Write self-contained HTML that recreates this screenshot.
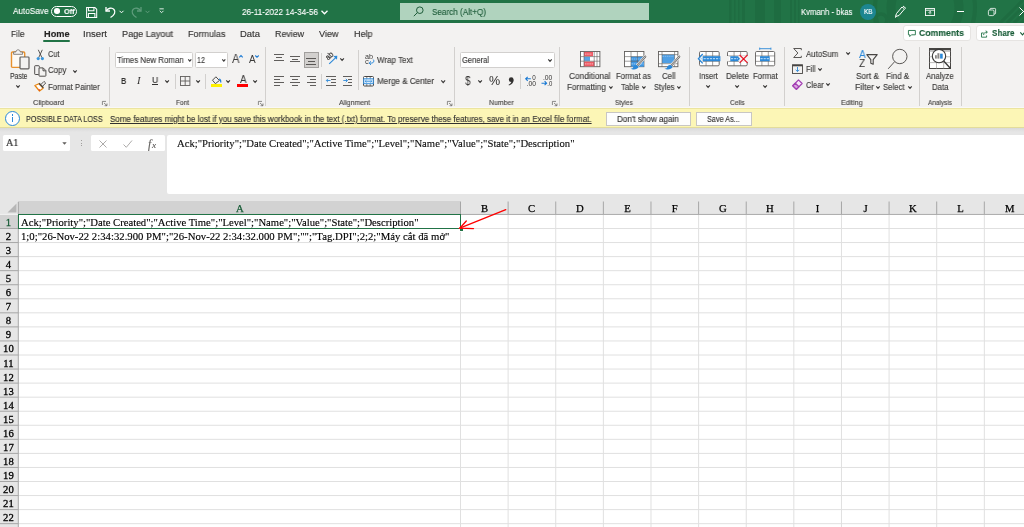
<!DOCTYPE html><html><head><meta charset="utf-8"><title>Excel</title><style>
html,body{margin:0;padding:0;background:#fff;}
#app{position:relative;width:1024px;height:527px;overflow:hidden;background:#fff;font-family:"Liberation Sans", sans-serif;}
.t{position:absolute;white-space:pre;transform-origin:0 50%;line-height:14px;height:14px;-webkit-text-stroke:0.14px currentColor;will-change:transform;}
svg{position:absolute;overflow:visible;}
</style></head><body><div id="app">
<div style="position:absolute;left:0px;top:0px;width:1024px;height:23.2px;background:#217346;"></div>
<div style="position:absolute;left:0px;top:23px;width:1024px;height:86px;background:#f3f2f1;"></div>
<div style="position:absolute;left:0px;top:107.3px;width:1024px;height:1.2px;background:#f9f8f7;"></div>
<div style="position:absolute;left:0px;top:108.3px;width:1024px;height:20px;background:#fcf6b6;border-top:0.600px solid #ebe4a0;border-bottom:0.600px solid #e3dc9c;box-sizing:border-box;"></div>
<div style="position:absolute;left:0px;top:128.3px;width:1024px;height:73px;background:#e6e6e6;"></div>
<div style="position:absolute;left:0px;top:128.3px;width:1024px;height:4px;background:linear-gradient(#d9d9d9,#e6e6e6);"></div>
<svg style="left:0;top:0;overflow:hidden" width="1024" height="23" viewBox="0 0 1024 23" fill="none"><rect x="729" y="0" width="2.5" height="23" fill="#1e6c41"/><rect x="734" y="0" width="1.5" height="23" fill="#1e6c41"/><rect x="738" y="0" width="1.5" height="23" fill="#1e6c41"/><rect x="742" y="0" width="2.8" height="23" fill="#1e6c41"/><rect x="755" y="0" width="10" height="23" fill="#1e6c41"/><rect x="774" y="0" width="6.8" height="23" fill="#1e6c41"/><rect x="790" y="0" width="1.8" height="23" fill="#1e6c41"/><rect x="794" y="0" width="1.8" height="23" fill="#1e6c41"/><rect x="798" y="0" width="1.5" height="23" fill="#1e6c41"/><circle cx="881" cy="20" r="6" stroke="#1e6c41" stroke-width="3.500"/><circle cx="925" cy="8" r="34" stroke="#1e6c41" stroke-width="9"/><circle cx="925" cy="8" r="50" stroke="#1e6c41" stroke-width="4"/><path d="M1000 23l23 -23" stroke="#1e6c41" stroke-width="3"/><path d="M1007 23l23 -23" stroke="#1e6c41" stroke-width="3"/><path d="M1014 23l23 -23" stroke="#1e6c41" stroke-width="3"/><path d="M1021 23l23 -23" stroke="#1e6c41" stroke-width="3"/><path d="M1028 23l23 -23" stroke="#1e6c41" stroke-width="3"/></svg>
<div style="position:absolute;left:51.200px;top:5.500px;width:23.800px;height:9px;border:1px solid #fff;border-radius:7px;box-sizing:content-box"></div>
<div style="position:absolute;left:54.300px;top:8.300px;width:5.500px;height:5.500px;border-radius:50%;background:#fff"></div>
<svg style="left:85.500px;top:6.800px" width="11.300" height="11" viewBox="0 0 12 12" fill="none" stroke="#fff" stroke-width="1.150"><path d="M0.5 0.5h9l2 2v9h-11z"/><path d="M2.5 0.5v3.5h6v-3.5"/><path d="M2.500 11.500v-4.500h7v4.500"/></svg>
<svg style="left:104.500px;top:6.300px" width="12" height="12" viewBox="0 0 12 12" fill="none" stroke="#fff" stroke-width="1.300"><path d="M1 1v4h4"/><path d="M1.200 4.800C3 2 7 1.200 9 3.500c2 2.500 0.500 5.500-3.500 8"/></svg>
<svg style="left:119px;top:9.500px" width="5" height="4" viewBox="0 0 5 4" fill="none" stroke="#fff" stroke-width="1"><path d="M0.500 0.800l2 2 2-2"/></svg>
<svg style="left:129.800px;top:6.300px" width="12" height="12" viewBox="0 0 12 12" fill="none" stroke="#5f9c7c" stroke-width="1.300"><path d="M11 1v4h-4"/><path d="M10.800 4.800C9 2 5 1.200 3 3.500c-2 2.500-0.500 5.500 3.500 8"/></svg>
<svg style="left:144.800px;top:9.500px" width="5" height="4" viewBox="0 0 5 4" fill="none" stroke="#5f9c7c" stroke-width="1"><path d="M0.500 0.800l2 2 2-2"/></svg>
<svg style="left:158.900px;top:8.200px" width="5.200" height="6" viewBox="0 0 6 7" fill="none" stroke="#fff" stroke-width="1"><path d="M0.500 1h5"/><path d="M0.800 3.300l2.200 2.200 2.200-2.200"/></svg>
<svg style="left:320.600px;top:9.600px" width="7" height="5" viewBox="0 0 7 5" fill="none" stroke="#fff" stroke-width="1.300"><path d="M0.500 0.800l3 3 3-3"/></svg>
<div style="position:absolute;left:400px;top:2.5px;width:249px;height:17.5px;background:#b0d3be;"></div>
<svg style="left:412.500px;top:6px" width="11" height="11" viewBox="0 0 11 11" fill="none" stroke="#1e5c3a" stroke-width="1"><circle cx="6.800" cy="4.200" r="3.300"/><path d="M4.400 6.600L0.800 10.200"/></svg>
<div style="position:absolute;left:859.5px;top:3.500px;width:16px;height:16px;border-radius:50%;background:#1d8691"></div>
<svg style="left:894px;top:5px" width="13" height="13" viewBox="0 0 13 13" fill="none" stroke="#fff" stroke-width="1"><path d="M2.500 8.500l5.500-6.500 2.500 2-5.500 6.500-3.500 1z"/><path d="M9 1l3 2.500"/><path d="M1 12.500l1.500-1"/></svg>
<svg style="left:925px;top:7.500px" width="10" height="8" viewBox="0 0 11 9" fill="none" stroke="#fff" stroke-width="1"><rect x="0.500" y="0.500" width="10" height="8"/><path d="M0.500 2.500h10"/><path d="M5.500 7v-3M4 5.300l1.500-1.500 1.500 1.500"/></svg>
<div style="position:absolute;left:957.3px;top:11px;width:6.7px;height:1px;background:#fff;"></div>
<svg style="left:987.700px;top:7.700px" width="8" height="8" viewBox="0 0 10 10" fill="none" stroke="#fff" stroke-width="1"><rect x="0.500" y="2.500" width="7" height="7" rx="1.500"/><path d="M2.500 2.500v-1a1 1 0 0 1 1-1h5a1 1 0 0 1 1 1v5a1 1 0 0 1-1 1h-1"/></svg>
<svg style="left:1019px;top:7px" width="9" height="9" viewBox="0 0 9 9" fill="none" stroke="#fff" stroke-width="1"><path d="M0.500 0.500l8 8M8.500 0.500l-8 8"/></svg>
<div style="position:absolute;left:43px;top:40.3px;width:26.5px;height:2.2px;background:#217346;border-radius:1px;"></div>
<div style="position:absolute;left:902.800px;top:25.100px;width:67.800px;height:16.400px;background:#fff;border:0.600px solid #e6e4e2;border-radius:3px;box-sizing:border-box"></div>
<svg style="left:908.200px;top:29.600px" width="7.800" height="7" viewBox="0 0 9 8" fill="none" stroke="#217346" stroke-width="1.050"><path d="M0.500 0.500h8v5h-4.500l-2 2v-2h-1.500z"/></svg>
<div style="position:absolute;left:976px;top:25.100px;width:52px;height:16.400px;background:#fff;border:0.600px solid #e6e4e2;border-radius:3px;box-sizing:border-box"></div>
<svg style="left:981px;top:30.200px" width="7.800" height="7.600" viewBox="0 0 9 9" fill="none" stroke="#217346" stroke-width="1.050"><path d="M3 3.500h-2.500v5h6v-2"/><path d="M3 6c0-2.500 1.500-3.500 4-3.500M5.500 0.800l2 1.700-2 1.700"/></svg>
<svg style="left:1019.500px;top:32.300px" width="5" height="3.500" viewBox="0 0 5 3.500" fill="none" stroke="#185c37" stroke-width="1.100"><path d="M0.300 0.400l2.200 2.500 2.200-2.500"/></svg>
<div style="position:absolute;left:109.0px;top:46.5px;width:1px;height:59.5px;background:#d2d0ce;"></div>
<div style="position:absolute;left:265.0px;top:46.5px;width:1px;height:59.5px;background:#d2d0ce;"></div>
<div style="position:absolute;left:454.0px;top:46.5px;width:1px;height:59.5px;background:#d2d0ce;"></div>
<div style="position:absolute;left:559.0px;top:46.5px;width:1px;height:59.5px;background:#d2d0ce;"></div>
<div style="position:absolute;left:688.5px;top:46.5px;width:1px;height:59.5px;background:#d2d0ce;"></div>
<div style="position:absolute;left:784.0px;top:46.5px;width:1px;height:59.5px;background:#d2d0ce;"></div>
<div style="position:absolute;left:919.0px;top:46.5px;width:1px;height:59.5px;background:#d2d0ce;"></div>
<div style="position:absolute;left:961.0px;top:46.5px;width:1px;height:59.5px;background:#d2d0ce;"></div>
<svg style="left:10px;top:48px" width="20" height="22" viewBox="0 0 20 22" fill="none">
<rect x="1.500" y="4" width="13.200" height="15.400" rx="1" stroke="#e8912d" stroke-width="1.400" fill="#fdfaf5"/>
<path d="M3.600 6.300v-2.300h2.300c0-2.900 4.400-2.900 4.400 0h2.300v2.300z" fill="#f3f2f1" stroke="#797775" stroke-width="0.900"/>
<rect x="10" y="9" width="9" height="11.800" rx="0.800" fill="#f3f2f1" stroke="#605e5c" stroke-width="1.200"/>
</svg>
<svg style="left:16.3px;top:85.3px" width="4" height="3.0" viewBox="0 0 4 3.0" fill="none" stroke="#3b3a39" stroke-width="1.15"><path d="M0.300 0.400l1.7 2.0l1.7 -2.0"/></svg>
<svg style="left:36px;top:48.500px" width="9" height="12" viewBox="0 0 9 12" fill="none">
<path d="M2.300 0.800l3.600 7.800M6.300 0.800l-3.600 7.800" stroke="#484644" stroke-width="0.900"/>
<circle cx="2.200" cy="9.600" r="1.600" fill="#3a96dd"/><circle cx="6.400" cy="9.600" r="1.600" fill="#3a96dd"/></svg>
<svg style="left:34px;top:64.500px" width="13" height="12" viewBox="0 0 13 12" fill="none" stroke="#484644" stroke-width="0.950">
<path d="M5.300 2.400v-1.100a0.600 0.600 0 0 0-0.600-0.600h-3.400a0.600 0.600 0 0 0-0.600 0.600v7.600a0.600 0.600 0 0 0 0.600 0.600h3.300"/>
<path d="M5 2.900h4.200l2.700 2.700v5a0.600 0.600 0 0 1-0.600 0.600h-5.700a0.600 0.600 0 0 1-0.600-0.600z" fill="#f3f2f1"/>
<path d="M9 3.100v2.700h2.700"/></svg>
<svg style="left:73.3px;top:69.7px" width="4" height="3.0" viewBox="0 0 4 3.0" fill="none" stroke="#3b3a39" stroke-width="1.15"><path d="M0.300 0.400l1.7 2.0l1.7 -2.0"/></svg>
<svg style="left:34px;top:80px" width="12" height="12" viewBox="0 0 12 12" fill="none">
<path d="M0.900 5.500l4-1.700 4.200 4.400-3.600 2.800z" fill="#fff" stroke="#e8820c" stroke-width="1.200" stroke-linejoin="round"/>
<circle cx="5.400" cy="9.800" r="0.600" fill="#e81123"/>
<path d="M6.900 4.500l3.100-3.100 1.700 1.600-3.100 3.300" stroke="#484644" stroke-width="0.900"/>
<path d="M5.100 3.200l4.300 4.500" stroke="#484644" stroke-width="1.400"/></svg>
<svg style="left:101.8px;top:100.6px" width="5.500" height="5" viewBox="0 0 5.500 5" fill="none" stroke="#605e5c" stroke-width="0.700"><path d="M0.400 4v-3.600h3.600"/><path d="M2 2l3 2.600M5 2.500v2.200h-2.400"/></svg>
<div style="position:absolute;left:115.300px;top:51.900px;width:77.700px;height:15.700px;background:#fff;border:0.700px solid #d2d0ce;border-radius:1.500px;box-sizing:border-box"></div>
<svg style="left:187.6px;top:59px" width="3.6" height="2.8" viewBox="0 0 3.6 2.8" fill="none" stroke="#3b3a39" stroke-width="1.15"><path d="M0.300 0.400l1.5 1.8l1.5 -1.8"/></svg>
<div style="position:absolute;left:194.600px;top:51.900px;width:33px;height:15.700px;background:#fff;border:0.700px solid #d2d0ce;border-radius:1.500px;box-sizing:border-box"></div>
<svg style="left:222px;top:59px" width="3.6" height="2.8" viewBox="0 0 3.6 2.8" fill="none" stroke="#3b3a39" stroke-width="1.15"><path d="M0.300 0.400l1.5 1.8l1.5 -1.8"/></svg>
<svg style="left:238.700px;top:54.800px" width="4" height="3" viewBox="0 0 4 3" fill="none" stroke="#1a7ad4" stroke-width="1.100"><path d="M0.300 2.400l1.700-1.800 1.700 1.800"/></svg>
<svg style="left:255px;top:54.800px" width="4" height="3" viewBox="0 0 4 3" fill="none" stroke="#1a7ad4" stroke-width="1.100"><path d="M0.300 0.500l1.700 1.800 1.700-1.800"/></svg>
<div style="position:absolute;left:151.9px;top:84.3px;width:6.2px;height:0.8px;background:#323130;"></div>
<svg style="left:165.4px;top:79.8px" width="4.2" height="3.1" viewBox="0 0 4.2 3.1" fill="none" stroke="#3b3a39" stroke-width="1.15"><path d="M0.300 0.400l1.8 2.1l1.8 -2.1"/></svg>
<div style="position:absolute;left:175.2px;top:74px;width:1px;height:14.5px;background:#d2d0ce;"></div>
<svg style="left:180.400px;top:76px" width="10.400" height="10" viewBox="0 0 10.400 10" fill="none" stroke="#605e5c" stroke-width="0.900"><rect x="0.500" y="0.500" width="9.400" height="9"/><path d="M5.200 0.500v9M0.500 5h9.400"/></svg>
<svg style="left:196px;top:79.8px" width="4.2" height="3.1" viewBox="0 0 4.2 3.1" fill="none" stroke="#3b3a39" stroke-width="1.15"><path d="M0.300 0.400l1.8 2.1l1.8 -2.1"/></svg>
<div style="position:absolute;left:205.2px;top:74px;width:1px;height:14.5px;background:#d2d0ce;"></div>
<svg style="left:211.500px;top:75.500px" width="10" height="9" viewBox="0 0 10 9" fill="none">
<path d="M3.900 0.800l3.500 3.700-4 3.200-2.900-3.500z" stroke="#3b3a39" stroke-width="0.900" stroke-linejoin="round"/>
<path d="M7.300 2.800c1.300 0.900 1.700 2.200 1.500 3.700" stroke="#1a7ad4" stroke-width="1.200"/></svg>
<div style="position:absolute;left:210.5px;top:83.9px;width:11.5px;height:2.8px;background:#fff100;"></div>
<svg style="left:226px;top:79.8px" width="4.2" height="3.1" viewBox="0 0 4.2 3.1" fill="none" stroke="#3b3a39" stroke-width="1.15"><path d="M0.300 0.400l1.8 2.1l1.8 -2.1"/></svg>
<div style="position:absolute;left:237.1px;top:83.9px;width:11.1px;height:2.8px;background:#ff0000;"></div>
<svg style="left:252.7px;top:79.8px" width="4.2" height="3.1" viewBox="0 0 4.2 3.1" fill="none" stroke="#3b3a39" stroke-width="1.15"><path d="M0.300 0.400l1.8 2.1l1.8 -2.1"/></svg>
<svg style="left:257.7px;top:100.6px" width="5.500" height="5" viewBox="0 0 5.500 5" fill="none" stroke="#605e5c" stroke-width="0.700"><path d="M0.400 4v-3.600h3.600"/><path d="M2 2l3 2.600M5 2.500v2.200h-2.400"/></svg>
<div style="position:absolute;left:274.1px;top:53.849999999999994px;width:9.9px;height:0.9px;background:#605e5c;"></div>
<div style="position:absolute;left:275.8px;top:56.75px;width:6.499999999999999px;height:0.9px;background:#605e5c;"></div>
<div style="position:absolute;left:274.1px;top:59.65px;width:9.9px;height:0.9px;background:#605e5c;"></div>
<div style="position:absolute;left:290.1px;top:55.949999999999996px;width:9.9px;height:0.9px;background:#605e5c;"></div>
<div style="position:absolute;left:291.8px;top:58.55px;width:6.499999999999999px;height:0.9px;background:#605e5c;"></div>
<div style="position:absolute;left:290.1px;top:61.15px;width:9.9px;height:0.9px;background:#605e5c;"></div>
<div style="position:absolute;left:304px;top:52.200px;width:15px;height:15.600px;background:#d2d0ce;border:0.800px solid #a19f9d;box-sizing:border-box"></div>
<div style="position:absolute;left:306.4px;top:58.449999999999996px;width:9.9px;height:0.9px;background:#5a5856;"></div>
<div style="position:absolute;left:308.09999999999997px;top:61.15px;width:6.499999999999999px;height:0.9px;background:#5a5856;"></div>
<div style="position:absolute;left:306.4px;top:63.849999999999994px;width:9.9px;height:0.9px;background:#5a5856;"></div>
<div style="position:absolute;left:321.0px;top:52.5px;width:1px;height:14.5px;background:#d2d0ce;"></div>
<svg style="left:325px;top:52px;will-change:transform" width="14" height="14" viewBox="0 0 14 14" fill="none">
<path d="M4.200 11.900l6.800-6.500" stroke="#2b88d8" stroke-width="1.100"/><path d="M8.300 4.100l4-0.300-0.300 4z" fill="#2b88d8"/>
<text x="0" y="0" transform="translate(3.300 8.600) rotate(-45)" font-size="8" font-family="Liberation Sans, sans-serif" fill="#3b3a39" stroke="#3b3a39" stroke-width="0.250" textLength="8" lengthAdjust="spacingAndGlyphs">ab</text></svg>
<svg style="left:339.8px;top:58.2px" width="4.2" height="3.1" viewBox="0 0 4.2 3.1" fill="none" stroke="#3b3a39" stroke-width="1.15"><path d="M0.300 0.400l1.8 2.1l1.8 -2.1"/></svg>
<div style="position:absolute;left:357.8px;top:50.3px;width:1px;height:39.400000000000006px;background:#d2d0ce;"></div>
<div style="position:absolute;left:274.2px;top:76.35px;width:9.7px;height:0.9px;background:#605e5c;"></div>
<div style="position:absolute;left:274.2px;top:79.05px;width:6px;height:0.9px;background:#605e5c;"></div>
<div style="position:absolute;left:274.2px;top:81.75px;width:9.7px;height:0.9px;background:#605e5c;"></div>
<div style="position:absolute;left:274.2px;top:84.55px;width:6px;height:0.9px;background:#605e5c;"></div>
<div style="position:absolute;left:290.2px;top:76.35px;width:9.8px;height:0.9px;background:#605e5c;"></div>
<div style="position:absolute;left:292.09999999999997px;top:79.05px;width:6.0px;height:0.9px;background:#605e5c;"></div>
<div style="position:absolute;left:290.2px;top:81.75px;width:9.8px;height:0.9px;background:#605e5c;"></div>
<div style="position:absolute;left:292.09999999999997px;top:84.55px;width:6.0px;height:0.9px;background:#605e5c;"></div>
<div style="position:absolute;left:306.5px;top:76.35px;width:9.8px;height:0.9px;background:#605e5c;"></div>
<div style="position:absolute;left:310.3px;top:79.05px;width:6.000000000000001px;height:0.9px;background:#605e5c;"></div>
<div style="position:absolute;left:306.5px;top:81.75px;width:9.8px;height:0.9px;background:#605e5c;"></div>
<div style="position:absolute;left:310.3px;top:84.55px;width:6.000000000000001px;height:0.9px;background:#605e5c;"></div>
<div style="position:absolute;left:321.0px;top:74px;width:1px;height:14.5px;background:#d2d0ce;"></div>
<div style="position:absolute;left:326.2px;top:76.35px;width:10px;height:0.9px;background:#605e5c;"></div>
<div style="position:absolute;left:331.2px;top:79.05px;width:5px;height:0.9px;background:#605e5c;"></div>
<div style="position:absolute;left:331.2px;top:81.75px;width:5px;height:0.9px;background:#605e5c;"></div>
<div style="position:absolute;left:326.2px;top:84.55px;width:10px;height:0.9px;background:#605e5c;"></div>
<svg style="left:326px;top:78.300px" width="5" height="5" viewBox="0 0 5 5" fill="none" stroke="#2b88d8" stroke-width="0.900"><path d="M4.500 2.500h-4M2 0.800l-1.700 1.700 1.700 1.700"/></svg>
<div style="position:absolute;left:342.8px;top:76.35px;width:9.7px;height:0.9px;background:#605e5c;"></div>
<div style="position:absolute;left:347.8px;top:79.05px;width:4.699999999999999px;height:0.9px;background:#605e5c;"></div>
<div style="position:absolute;left:347.8px;top:81.75px;width:4.699999999999999px;height:0.9px;background:#605e5c;"></div>
<div style="position:absolute;left:342.8px;top:84.55px;width:9.7px;height:0.9px;background:#605e5c;"></div>
<svg style="left:342.500px;top:78.300px" width="5" height="5" viewBox="0 0 5 5" fill="none" stroke="#2b88d8" stroke-width="0.900"><path d="M0.300 2.500h4M2.800 0.800l1.700 1.700-1.700 1.700"/></svg>
<svg style="left:364px;top:54px;will-change:transform" width="11" height="11" viewBox="0 0 11 11" fill="none">
<text x="0.900" y="5.300" font-size="7.600" font-family="Liberation Sans, sans-serif" fill="#3b3a39" textLength="8" lengthAdjust="spacingAndGlyphs">ab</text>
<text x="0.900" y="9.900" font-size="7.600" font-family="Liberation Sans, sans-serif" fill="#3b3a39">c</text>
<path d="M9.300 5.600c1.300 1.500 0.300 3.500-1.800 3.500h-1.600" stroke="#2b88d8" stroke-width="1"/><path d="M7 7.300l-1.900 1.800 1.900 1.800" stroke="#2b88d8" stroke-width="1"/></svg>
<svg style="left:363px;top:75.500px" width="11" height="10.500" viewBox="0 0 11 10.500" fill="none">
<rect x="0.500" y="0.500" width="10" height="9.500" rx="1" fill="#fff" stroke="#484644" stroke-width="1"/>
<path d="M3.800 0.500v2.300M7.200 0.500v2.300M3.800 7.700v2.300M7.200 7.700v2.300" stroke="#484644" stroke-width="0.700"/>
<rect x="0.700" y="2.800" width="9.600" height="4.900" fill="#d9ebfb" stroke="#2b88d8" stroke-width="0.900"/>
<path d="M2.300 5.250h6.400M3.500 4l-1.300 1.250 1.300 1.250M7.500 4l1.300 1.250-1.300 1.250" stroke="#2b88d8" stroke-width="0.800"/></svg>
<svg style="left:441px;top:80px" width="4.4" height="3.2" viewBox="0 0 4.4 3.2" fill="none" stroke="#3b3a39" stroke-width="1.15"><path d="M0.300 0.400l1.9000000000000001 2.2l1.9000000000000001 -2.2"/></svg>
<svg style="left:446.6px;top:100.6px" width="5.500" height="5" viewBox="0 0 5.500 5" fill="none" stroke="#605e5c" stroke-width="0.700"><path d="M0.400 4v-3.600h3.600"/><path d="M2 2l3 2.600M5 2.500v2.200h-2.400"/></svg>
<div style="position:absolute;left:460.100px;top:51.900px;width:94.700px;height:15.700px;background:#fff;border:0.700px solid #d2d0ce;border-radius:1.500px;box-sizing:border-box"></div>
<svg style="left:548.2px;top:59px" width="4" height="3.0" viewBox="0 0 4 3.0" fill="none" stroke="#3b3a39" stroke-width="1.15"><path d="M0.300 0.400l1.7 2.0l1.7 -2.0"/></svg>
<svg style="left:477.7px;top:79.8px" width="4.2" height="3.1" viewBox="0 0 4.2 3.1" fill="none" stroke="#3b3a39" stroke-width="1.15"><path d="M0.300 0.400l1.8 2.1l1.8 -2.1"/></svg>
<svg style="left:507px;top:76px" width="8" height="10" viewBox="0 0 8 10"><circle cx="4.200" cy="3.700" r="2.350" fill="#323130"/><path d="M6.550 3.600c0.300 3-1.500 5-4.600 5.900l-0.350-0.800c1.900-0.800 2.900-2 2.700-3.600z" fill="#323130"/></svg>
<div style="position:absolute;left:520.0px;top:74px;width:1px;height:14.5px;background:#d2d0ce;"></div>
<svg style="left:525px;top:76px;will-change:transform" width="12" height="10" viewBox="0 0 12 10" fill="none">
<path d="M5.800 2.800h-5M2.700 0.800l-2 2 2 2" stroke="#1a7ad4" stroke-width="1.100"/>
<text x="7.200" y="4.400" font-size="6.400" font-family="Liberation Sans, sans-serif" fill="#323130" lengthAdjust="spacingAndGlyphs" textLength="3.500">0</text>
<text x="1.700" y="9.700" font-size="6.400" font-family="Liberation Sans, sans-serif" fill="#323130" lengthAdjust="spacingAndGlyphs" textLength="9.400">.00</text></svg>
<svg style="left:541px;top:76px;will-change:transform" width="12" height="10" viewBox="0 0 12 10" fill="none">
<text x="1.900" y="4.400" font-size="6.400" font-family="Liberation Sans, sans-serif" fill="#323130" lengthAdjust="spacingAndGlyphs" textLength="9.400">.00</text>
<path d="M0.500 7.200h5M3.600 5.200l2 2-2 2" stroke="#1a7ad4" stroke-width="1.100"/>
<text x="6.300" y="9.700" font-size="6.400" font-family="Liberation Sans, sans-serif" fill="#323130" lengthAdjust="spacingAndGlyphs" textLength="5">.0</text></svg>
<svg style="left:551.6px;top:100.6px" width="5.500" height="5" viewBox="0 0 5.500 5" fill="none" stroke="#605e5c" stroke-width="0.700"><path d="M0.400 4v-3.600h3.600"/><path d="M2 2l3 2.600M5 2.500v2.200h-2.400"/></svg>
<svg style="left:580px;top:50.500px" width="21" height="17" viewBox="0 0 21 17" fill="none">
<rect x="0.500" y="0.500" width="19.400" height="15.200" fill="#fff" stroke="#605e5c" stroke-width="0.900"/>
<rect x="4" y="0.900" width="9" height="4.400" fill="#ee5a65"/><rect x="4" y="5.900" width="6" height="4" fill="#5aa5e6"/><rect x="4" y="10.500" width="10.500" height="4.800" fill="#ee5a65"/>
<path d="M5 3.100h7M5 12.900h8.500" stroke="#f7a6ac" stroke-width="1.400" stroke-dasharray="1.500 0.700"/>
<path d="M4 0.500v15.200M14.200 0.500v15.200M17 0.500v15.200M0.500 5.600h19.400M0.500 10.200h19.400" stroke="#605e5c" stroke-width="0.600"/></svg>
<svg style="left:608.6px;top:85.6px" width="3.8" height="2.9" viewBox="0 0 3.8 2.9" fill="none" stroke="#3b3a39" stroke-width="1.15"><path d="M0.300 0.400l1.5999999999999999 1.9l1.5999999999999999 -1.9"/></svg>
<svg style="left:624px;top:50.500px" width="24" height="20" viewBox="0 0 24 20" fill="none">
<rect x="0.500" y="0.500" width="19.400" height="15.200" fill="#fff" stroke="#605e5c" stroke-width="0.900"/>
<rect x="7" y="5.600" width="12.900" height="10.100" fill="#3f97e3"/>
<path d="M7 0.500v15.200M13.400 0.500v15.200M0.500 5.600h19.400M0.500 10.200h19.400" stroke="#605e5c" stroke-width="0.600"/>
<path d="M7.500 8h12M7.500 12.800h12" stroke="#8cc0ee" stroke-width="1.200" stroke-dasharray="1.500 0.700"/>
<path d="M21.3 5.6l-8 9" stroke="#f3f2f1" stroke-width="3.200" stroke-linecap="round"/><path d="M21.3 5.6l-8 9" stroke="#605e5c" stroke-width="2" stroke-linecap="round"/><path d="M21.3 5.6l-8 9" stroke="#fff" stroke-width="0.700" stroke-linecap="round"/><path d="M12.700000000000001 14.0c-1.800 -0.400 -3.400 0.600 -3.600 2.400c-0.400 1 -1.600 1.200 -2.600 1c2 1.800 6.800 1.700 8.200 -1.600z" fill="#2b88d8"/></svg>
<svg style="left:642px;top:85.6px" width="3.8" height="2.9" viewBox="0 0 3.8 2.9" fill="none" stroke="#3b3a39" stroke-width="1.15"><path d="M0.300 0.400l1.5999999999999999 1.9l1.5999999999999999 -1.9"/></svg>
<svg style="left:658px;top:50.500px" width="24" height="20" viewBox="0 0 24 20" fill="none">
<rect x="0.500" y="0.500" width="19.400" height="15.200" fill="#fff" stroke="#605e5c" stroke-width="0.900"/>
<rect x="4" y="3.600" width="12.600" height="8.600" fill="#4f9fe4"/>
<path d="M4 0.500v15.200M16.600 0.500v15.200M0.500 3.600h19.400M0.500 12.700h19.400" stroke="#605e5c" stroke-width="0.600"/>
<path d="M4.500 5.300h11.500" stroke="#8cc0ee" stroke-width="0.900" stroke-dasharray="1.500 0.700"/>
<path d="M21.3 5.6l-8 9" stroke="#f3f2f1" stroke-width="3.200" stroke-linecap="round"/><path d="M21.3 5.6l-8 9" stroke="#605e5c" stroke-width="2" stroke-linecap="round"/><path d="M21.3 5.6l-8 9" stroke="#fff" stroke-width="0.700" stroke-linecap="round"/><path d="M12.700000000000001 14.0c-1.800 -0.400 -3.400 0.600 -3.600 2.400c-0.400 1 -1.600 1.200 -2.600 1c2 1.800 6.800 1.700 8.200 -1.600z" fill="#2b88d8"/></svg>
<svg style="left:677.4px;top:85.6px" width="3.8" height="2.9" viewBox="0 0 3.8 2.9" fill="none" stroke="#3b3a39" stroke-width="1.15"><path d="M0.300 0.400l1.5999999999999999 1.9l1.5999999999999999 -1.9"/></svg>
<svg style="left:698.600px;top:50.700px" width="23" height="16" viewBox="0 0 23 16" fill="none">
<rect x="0.500" y="0.500" width="19.7" height="14.3" rx="1.200" fill="#fff" stroke="#605e5c" stroke-width="0.900"/><path d="M7.07 0.500v14.3M13.63 0.500v14.3M0.500 4.93h19.7M0.500 10.37h19.7" stroke="#605e5c" stroke-width="0.600"/>
<rect x="3" y="5.200" width="18.400" height="5" fill="#2b88d8"/>
<path d="M3.700 3l-4.300 4.700 4.300 4.700" stroke="#2b88d8" stroke-width="1.300" fill="#f3f2f1"/>
<path d="M1.500 7.700h19" stroke="#a9d2f5" stroke-width="1.300" stroke-dasharray="2.200 0.900"/></svg>
<svg style="left:706.2px;top:85.3px" width="4.2" height="3.1" viewBox="0 0 4.2 3.1" fill="none" stroke="#3b3a39" stroke-width="1.15"><path d="M0.300 0.400l1.8 2.1l1.8 -2.1"/></svg>
<svg style="left:726.700px;top:50.700px" width="23" height="16" viewBox="0 0 23 16" fill="none">
<rect x="0.500" y="0.500" width="19.7" height="14.3" rx="1.200" fill="#fff" stroke="#605e5c" stroke-width="0.900"/><path d="M7.07 0.500v14.3M13.63 0.500v14.3M0.500 4.93h19.7M0.500 10.37h19.7" stroke="#605e5c" stroke-width="0.600"/>
<rect x="-0.200" y="5" width="2" height="5.400" fill="#f3f2f1"/><rect x="12" y="4.500" width="10" height="6.400" fill="#f3f2f1"/>
<path d="M3.300 5.200h7.500l2.200 2.500-2.200 2.500h-7.500z" fill="#2b88d8"/>
<path d="M4 7.700h7" stroke="#a9d2f5" stroke-width="1.300" stroke-dasharray="2.200 0.900"/>
<path d="M12.600 4l7.900 7.900M20.500 4l-7.900 7.900" stroke="#e81123" stroke-width="1.100"/></svg>
<svg style="left:734.5px;top:85.3px" width="4.2" height="3.1" viewBox="0 0 4.2 3.1" fill="none" stroke="#3b3a39" stroke-width="1.15"><path d="M0.300 0.400l1.8 2.1l1.8 -2.1"/></svg>
<svg style="left:755px;top:50.700px" width="23" height="16" viewBox="0 0 23 16" fill="none">
<rect x="0.500" y="0.500" width="19.2" height="14.3" rx="1.200" fill="#fff" stroke="#605e5c" stroke-width="0.900"/><path d="M6.90 0.500v14.3M13.30 0.500v14.3M0.500 4.93h19.2M0.500 10.37h19.2" stroke="#605e5c" stroke-width="0.600"/>
<rect x="5" y="5.200" width="9.700" height="5" fill="#2b88d8"/>
<path d="M5.500 7.700h9" stroke="#a9d2f5" stroke-width="1.300" stroke-dasharray="2.200 0.900"/>
<path d="M4.700 -2.300h11.200M4.700 -3.400v2.200M15.900 -3.400v2.200" stroke="#2b88d8" stroke-width="0.900"/></svg>
<svg style="left:762.6px;top:85.3px" width="4.2" height="3.1" viewBox="0 0 4.2 3.1" fill="none" stroke="#3b3a39" stroke-width="1.15"><path d="M0.300 0.400l1.8 2.1l1.8 -2.1"/></svg>
<svg style="left:793.300px;top:48px" width="9" height="10" viewBox="0 0 9 10" fill="none" stroke="#484644" stroke-width="0.900"><path d="M8.300 2.200v-1.700h-7.600l4.200 4.500-4.200 4.500h7.600v-1.700"/></svg>
<svg style="left:845.8px;top:52.3px" width="4.2" height="3.1" viewBox="0 0 4.2 3.1" fill="none" stroke="#3b3a39" stroke-width="1.15"><path d="M0.300 0.400l1.8 2.1l1.8 -2.1"/></svg>
<svg style="left:792px;top:63.800px" width="11" height="10" viewBox="0 0 11 10" fill="none"><path d="M0.500 1.500h10" stroke="#484644" stroke-width="1.600"/><rect x="0.500" y="0.800" width="10" height="8.700" stroke="#484644" stroke-width="0.900"/><path d="M5.500 3v4.500M3.700 5.800l1.800 1.800 1.800-1.800" stroke="#2b88d8" stroke-width="0.900"/></svg>
<svg style="left:818px;top:68px" width="4" height="3.0" viewBox="0 0 4 3.0" fill="none" stroke="#3b3a39" stroke-width="1.15"><path d="M0.300 0.400l1.7 2.0l1.7 -2.0"/></svg>
<svg style="left:792.400px;top:79.300px" width="11" height="11.500" viewBox="0 0 11 11.500" fill="none" stroke="#a33fb3" stroke-width="1.250" stroke-linejoin="round"><path d="M6.500 0.900l3.600 3.600-5.700 5.900-3.600-3.600z" fill="#f6e6f8"/><path d="M3.300 4.200l3.600 3.600-2.500 2.600-3.600-3.600z" fill="#d9a3e0"/></svg>
<svg style="left:826px;top:83.2px" width="4" height="3.0" viewBox="0 0 4 3.0" fill="none" stroke="#3b3a39" stroke-width="1.15"><path d="M0.300 0.400l1.7 2.0l1.7 -2.0"/></svg>
<svg style="left:866.300px;top:53.500px" width="12" height="11.500" viewBox="0 0 12 11.500" fill="none" stroke="#484644" stroke-width="1.100" stroke-linejoin="round"><path d="M0.800 0.600h10.400l-4 5v4.700l-2.400-1v-3.700z"/></svg>
<svg style="left:875.5px;top:85.6px" width="4" height="3.0" viewBox="0 0 4 3.0" fill="none" stroke="#3b3a39" stroke-width="1.15"><path d="M0.300 0.400l1.7 2.0l1.7 -2.0"/></svg>
<svg style="left:887px;top:47.500px" width="22" height="22" viewBox="0 0 22 22" fill="none" stroke="#484644" stroke-width="0.900"><circle cx="12.800" cy="8.500" r="7.200"/><path d="M7.700 13.600l-6.500 7.200"/></svg>
<svg style="left:907.6px;top:85.6px" width="4" height="3.0" viewBox="0 0 4 3.0" fill="none" stroke="#3b3a39" stroke-width="1.15"><path d="M0.300 0.400l1.7 2.0l1.7 -2.0"/></svg>
<svg style="left:929.200px;top:48px" width="23" height="22" viewBox="0 0 23 22" fill="none">
<rect x="0.500" y="0.500" width="21" height="20" fill="#fff" stroke="#484644" stroke-width="1"/>
<path d="M0.500 1.500h21" stroke="#484644" stroke-width="1.600"/>
<path d="M7.500 3v17.500M14.700 3v17.500M0.500 3.300h21M0.500 8.800h21M0.500 14.600h21" stroke="#a19f9d" stroke-width="0.700"/>
<circle cx="10" cy="8.100" r="6.700" fill="#fff" stroke="#3b3a39" stroke-width="1.100"/>
<path d="M14.700 13l6.800 7.500" stroke="#3b3a39" stroke-width="1.300"/>
<rect x="6" y="7.200" width="1.800" height="3.400" fill="#8a8886"/><rect x="8.400" y="5.200" width="2" height="5.400" fill="#8a8886"/><rect x="11.100" y="5.700" width="2.600" height="4.900" fill="#2b88d8"/></svg>
<div style="position:absolute;left:4.800px;top:110.800px;width:15.400px;height:15.400px;border-radius:50%;background:#fff;border:1.200px solid #2b88d8;box-sizing:border-box"></div>
<div style="position:absolute;left:11.8px;top:117.3px;width:1.5px;height:5.2px;background:#2b88d8;"></div>
<div style="position:absolute;left:11.8px;top:114.3px;width:1.5px;height:1.6px;background:#2b88d8;"></div>
<div style="position:absolute;left:605.500px;top:111.500px;width:85px;height:14px;background:#fdfdfd;border:0.700px solid #c8c6c4;box-sizing:border-box"></div>
<div style="position:absolute;left:696.400px;top:111.500px;width:55.200px;height:14px;background:#fdfdfd;border:0.700px solid #c8c6c4;box-sizing:border-box"></div>
<div style="position:absolute;left:2.500px;top:134.700px;width:67.500px;height:16.500px;background:#fff;border-radius:1.500px"></div>
<svg style="left:61.500px;top:141.800px" width="5" height="3" viewBox="0 0 5 3"><path d="M0.300 0.300h4.400l-2.200 2.400z" fill="#605e5c"/></svg>
<div style="position:absolute;left:80.6px;top:140px;width:1px;height:1px;background:#a19f9d;"></div>
<div style="position:absolute;left:80.6px;top:142.6px;width:1px;height:1px;background:#a19f9d;"></div>
<div style="position:absolute;left:80.6px;top:145.2px;width:1px;height:1px;background:#a19f9d;"></div>
<div style="position:absolute;left:91px;top:134.700px;width:74.300px;height:16.500px;background:#fff;border-radius:1.500px"></div>
<svg style="left:99.400px;top:140px" width="8" height="8" viewBox="0 0 8 8" fill="none" stroke="#adabaa" stroke-width="1"><path d="M0.500 0.500l7 7M7.500 0.500l-7 7"/></svg>
<svg style="left:123.300px;top:140px" width="9.500" height="8" viewBox="0 0 9.500 8" fill="none" stroke="#adabaa" stroke-width="1"><path d="M0.500 4.500l2.800 2.800 5.700-6.800"/></svg>
<div style="position:absolute;left:167px;top:135px;width:860px;height:59.200px;background:#fff;border-radius:2px"></div>
<div style="position:absolute;left:0px;top:200.5px;width:1024px;height:13.949999999999989px;background:#e6e6e6;"></div>
<div style="position:absolute;left:0px;top:214.45px;width:18.3px;height:312.55px;background:#e6e6e6;"></div>
<div style="position:absolute;left:18.3px;top:200.5px;width:442.2px;height:13.949999999999989px;background:#d2d2d2;"></div>
<div style="position:absolute;left:0px;top:214.45px;width:18.3px;height:14.055px;background:#d2d2d2;"></div>
<svg style="left:7px;top:203px" width="10" height="10" viewBox="0 0 10 10"><path d="M9.500 0.500v9h-9z" fill="#b7b7b7"/></svg>
<svg style="left:0;top:0" width="1024" height="527" viewBox="0 0 1024 527" fill="none"><path d="M18.3 228.50H1024M18.3 242.56H1024M18.3 256.62H1024M18.3 270.67H1024M18.3 284.73H1024M18.3 298.78H1024M18.3 312.83H1024M18.3 326.89H1024M18.3 340.94H1024M18.3 355.00H1024M18.3 369.05H1024M18.3 383.11H1024M18.3 397.16H1024M18.3 411.22H1024M18.3 425.27H1024M18.3 439.33H1024M18.3 453.38H1024M18.3 467.44H1024M18.3 481.50H1024M18.3 495.55H1024M18.3 509.60H1024M18.3 523.66H1024M460.50 214.45V527M508.12 214.45V527M555.74 214.45V527M603.36 214.45V527M650.98 214.45V527M698.60 214.45V527M746.22 214.45V527M793.84 214.45V527M841.46 214.45V527M889.08 214.45V527M936.70 214.45V527M984.32 214.45V527M1031.94 214.45V527" stroke="#e0e0e0" stroke-width="1"/><path d="M0 228.50H18.3M0 242.56H18.3M0 256.62H18.3M0 270.67H18.3M0 284.73H18.3M0 298.78H18.3M0 312.83H18.3M0 326.89H18.3M0 340.94H18.3M0 355.00H18.3M0 369.05H18.3M0 383.11H18.3M0 397.16H18.3M0 411.22H18.3M0 425.27H18.3M0 439.33H18.3M0 453.38H18.3M0 467.44H18.3M0 481.50H18.3M0 495.55H18.3M0 509.60H18.3M0 523.66H18.3M460.50 201.500V214.45M508.12 201.500V214.45M555.74 201.500V214.45M603.36 201.500V214.45M650.98 201.500V214.45M698.60 201.500V214.45M746.22 201.500V214.45M793.84 201.500V214.45M841.46 201.500V214.45M889.08 201.500V214.45M936.70 201.500V214.45M984.32 201.500V214.45M1031.94 201.500V214.45M18.3 214.45V527M18.3 202V214.45" stroke="#a6a6a6" stroke-width="1"/><path d="M18.3 214.45H1024" stroke="#ababab" stroke-width="1"/><path d="M0 214.45H18.3" stroke="#f2f2f2" stroke-width="1"/></svg>
<div style="position:absolute;left:17.6px;top:213.75px;width:443.59999999999997px;height:15.455px;border:1.400px solid #217346;box-sizing:border-box"></div>
<div style="position:absolute;left:459.0px;top:227.005px;width:2.8px;height:2.8px;background:#217346;border:0.500px solid #fff;box-sizing:content-box;"></div>
<svg style="left:0;top:0" width="1024" height="527" viewBox="0 0 1024 527" fill="none" stroke="#ff0000" stroke-width="1.300" stroke-linecap="round"><path d="M505.800 209.700L459.800 228.200"/><path d="M466.300 221L459.800 228.200L473.500 228.600"/></svg>
<span class="t" style="left:13px;top:4px;font-size:9.5px;color:#fff;transform:scaleX(0.862);">AutoSave</span>
<span class="t" style="left:64.3px;top:4.9px;font-size:8px;color:#fff;font-weight:700;transform:scaleX(0.908);">Off</span>
<span class="t" style="left:242px;top:4.5px;font-size:9.5px;color:#fff;transform:scaleX(0.858);">26-11-2022 14-34-56</span>
<span class="t" style="left:432px;top:4.5px;font-size:9.5px;color:#1e5c3a;transform:scaleX(0.856);">Search (Alt+Q)</span>
<span class="t" style="left:801px;top:4.5px;font-size:9.5px;color:#fff;transform:scaleX(0.813);">Kvmanh - bkas</span>
<span class="t" style="left:863.5px;top:4.5px;font-size:6.5px;color:#fff;transform:scaleX(0.980);">KB</span>
<span class="t" style="left:10.5px;top:27px;font-size:9.2px;color:#323130;transform:scaleX(0.911);">File</span>
<span class="t" style="left:43.5px;top:27px;font-size:9.2px;color:#252423;font-weight:700;">Home</span>
<span class="t" style="left:83px;top:27px;font-size:9.2px;color:#323130;transform:scaleX(1.044);">Insert</span>
<span class="t" style="left:121.5px;top:27px;font-size:9.2px;color:#323130;transform:scaleX(0.988);">Page Layout</span>
<span class="t" style="left:187.5px;top:27px;font-size:9.2px;color:#323130;transform:scaleX(0.979);">Formulas</span>
<span class="t" style="left:239.5px;top:27px;font-size:9.2px;color:#323130;transform:scaleX(1.030);">Data</span>
<span class="t" style="left:274.5px;top:27px;font-size:9.2px;color:#323130;transform:scaleX(0.963);">Review</span>
<span class="t" style="left:318.5px;top:27px;font-size:9.2px;color:#323130;transform:scaleX(0.987);">View</span>
<span class="t" style="left:353.5px;top:27px;font-size:9.2px;color:#323130;transform:scaleX(0.979);">Help</span>
<span class="t" style="left:919.3px;top:26.200000000000003px;font-size:9.6px;color:#185c37;font-weight:700;transform:scaleX(0.906);">Comments</span>
<span class="t" style="left:992.3px;top:26.200000000000003px;font-size:9.6px;color:#185c37;font-weight:700;transform:scaleX(0.844);">Share</span>
<span class="t" style="left:9.8px;top:69.3px;font-size:8.8px;color:#3b3a39;transform:scaleX(0.778);">Paste</span>
<span class="t" style="left:47.9px;top:47.2px;font-size:8.8px;color:#3b3a39;transform:scaleX(0.832);">Cut</span>
<span class="t" style="left:47.9px;top:63.3px;font-size:8.8px;color:#3b3a39;transform:scaleX(0.891);">Copy</span>
<span class="t" style="left:47.9px;top:79.6px;font-size:8.8px;color:#3b3a39;transform:scaleX(0.889);">Format Painter</span>
<span class="t" style="left:33.2px;top:96.3px;font-size:7.5px;color:#4a4846;transform:scaleX(0.965);">Clipboard</span>
<span class="t" style="left:117.4px;top:53px;font-size:8.8px;color:#3b3a39;transform:scaleX(0.896);">Times New Roman</span>
<span class="t" style="left:196.9px;top:53px;font-size:8.8px;color:#3b3a39;transform:scaleX(0.806);">12</span>
<span class="t" style="left:231.9px;top:51.7px;font-size:12.2px;color:#3b3a39;transform:scaleX(0.921);-webkit-text-stroke:0;">A</span>
<span class="t" style="left:249px;top:52.6px;font-size:10px;color:#3b3a39;transform:scaleX(0.974);-webkit-text-stroke:0;">A</span>
<span class="t" style="left:120.5px;top:73.6px;font-size:9.8px;color:#323130;font-weight:700;transform:scaleX(0.749);-webkit-text-stroke:0;">B</span>
<span class="t" style="left:137.3px;top:73.6px;font-size:10.5px;color:#323130;font-family:'Liberation Serif', serif;font-style:italic;-webkit-text-stroke:0;">I</span>
<span class="t" style="left:151.9px;top:73.3px;font-size:9.6px;color:#323130;transform:scaleX(0.894);">U</span>
<span class="t" style="left:239.5px;top:72.4px;font-size:10.5px;color:#323130;transform:scaleX(0.927);-webkit-text-stroke:0;">A</span>
<span class="t" style="left:175.7px;top:96.3px;font-size:7.5px;color:#4a4846;transform:scaleX(0.872);">Font</span>
<span class="t" style="left:376.7px;top:53px;font-size:8.8px;color:#3b3a39;transform:scaleX(0.909);">Wrap Text</span>
<span class="t" style="left:376.7px;top:74.3px;font-size:8.8px;color:#3b3a39;transform:scaleX(0.918);">Merge &amp; Center</span>
<span class="t" style="left:339px;top:96.3px;font-size:7.5px;color:#4a4846;transform:scaleX(0.929);">Alignment</span>
<span class="t" style="left:462.3px;top:53px;font-size:8.8px;color:#3b3a39;transform:scaleX(0.863);">General</span>
<span class="t" style="left:464.6px;top:74px;font-size:13.5px;color:#323130;transform:scaleX(0.758);-webkit-text-stroke:0;">$</span>
<span class="t" style="left:488.8px;top:74px;font-size:12px;color:#323130;transform:scaleX(1.049);-webkit-text-stroke:0;">%</span>
<span class="t" style="left:489px;top:96.3px;font-size:7.5px;color:#4a4846;transform:scaleX(0.929);">Number</span>
<span class="t" style="left:569px;top:69.1px;font-size:8.8px;color:#3b3a39;transform:scaleX(0.941);">Conditional</span>
<span class="t" style="left:566.7px;top:80px;font-size:8.8px;color:#3b3a39;transform:scaleX(0.923);">Formatting</span>
<span class="t" style="left:616.4px;top:69.1px;font-size:8.8px;color:#3b3a39;transform:scaleX(0.881);">Format as</span>
<span class="t" style="left:621.2px;top:80px;font-size:8.8px;color:#3b3a39;transform:scaleX(0.865);">Table</span>
<span class="t" style="left:661.5px;top:69.1px;font-size:8.8px;color:#3b3a39;transform:scaleX(0.891);">Cell</span>
<span class="t" style="left:654.2px;top:80px;font-size:8.8px;color:#3b3a39;transform:scaleX(0.855);">Styles</span>
<span class="t" style="left:615px;top:96.3px;font-size:7.5px;color:#4a4846;transform:scaleX(0.871);">Styles</span>
<span class="t" style="left:699.3px;top:69.1px;font-size:8.8px;color:#3b3a39;transform:scaleX(0.854);">Insert</span>
<span class="t" style="left:725.6px;top:69.1px;font-size:8.8px;color:#3b3a39;transform:scaleX(0.904);">Delete</span>
<span class="t" style="left:752.6px;top:69.1px;font-size:8.8px;color:#3b3a39;transform:scaleX(0.886);">Format</span>
<span class="t" style="left:729.5px;top:96.3px;font-size:7.5px;color:#4a4846;transform:scaleX(0.876);">Cells</span>
<span class="t" style="left:805.6px;top:46.6px;font-size:8.8px;color:#3b3a39;transform:scaleX(0.895);">AutoSum</span>
<span class="t" style="left:805.6px;top:61.900000000000006px;font-size:8.8px;color:#3b3a39;transform:scaleX(0.853);">Fill</span>
<span class="t" style="left:805.6px;top:77.7px;font-size:8.8px;color:#3b3a39;transform:scaleX(0.846);">Clear</span>
<span class="t" style="left:858.8px;top:46.8px;font-size:11.3px;color:#2b88d8;transform:scaleX(0.901);-webkit-text-stroke:0;">A</span>
<span class="t" style="left:859px;top:56.2px;font-size:11.3px;color:#323130;transform:scaleX(0.898);-webkit-text-stroke:0;">Z</span>
<span class="t" style="left:856px;top:69.1px;font-size:8.8px;color:#3b3a39;transform:scaleX(0.941);">Sort &amp;</span>
<span class="t" style="left:855px;top:80px;font-size:8.8px;color:#3b3a39;transform:scaleX(0.976);">Filter</span>
<span class="t" style="left:886.2px;top:69.1px;font-size:8.8px;color:#3b3a39;transform:scaleX(0.912);">Find &amp;</span>
<span class="t" style="left:883.4px;top:80px;font-size:8.8px;color:#3b3a39;transform:scaleX(0.883);">Select</span>
<span class="t" style="left:841px;top:96.3px;font-size:7.5px;color:#4a4846;transform:scaleX(0.942);">Editing</span>
<span class="t" style="left:926.2px;top:69.1px;font-size:8.8px;color:#3b3a39;transform:scaleX(0.882);">Analyze</span>
<span class="t" style="left:931.6px;top:80px;font-size:8.8px;color:#3b3a39;transform:scaleX(0.887);">Data</span>
<span class="t" style="left:927.9px;top:96.3px;font-size:7.5px;color:#4a4846;transform:scaleX(0.855);">Analysis</span>
<span class="t" style="left:26.3px;top:111.8px;font-size:8.8px;color:#323130;transform:scaleX(0.820);">POSSIBLE DATA LOSS</span>
<span class="t" style="left:110.1px;top:111.8px;font-size:8.8px;color:#323130;transform:scaleX(0.915);text-decoration:underline;text-underline-offset:1px;">Some features might be lost if you save this workbook in the text (.txt) format. To preserve these features, save it in an Excel file format.</span>
<span class="t" style="left:616.5px;top:111.6px;font-size:8.8px;color:#323130;transform:scaleX(0.918);">Don&#x27;t show again</span>
<span class="t" style="left:707.2px;top:111.6px;font-size:8.8px;color:#323130;transform:scaleX(0.828);">Save As...</span>
<span class="t" style="left:6px;top:134.9px;font-size:10.67px;color:#222;font-family:'Liberation Serif', serif;transform:scaleX(0.944);">A1</span>
<span class="t" style="left:148.3px;top:136.8px;font-size:11.5px;color:#605e5c;font-family:'Liberation Serif', serif;font-style:italic;">f</span>
<span class="t" style="left:151.8px;top:138.8px;font-size:8px;color:#605e5c;font-family:'Liberation Serif', serif;transform:scaleX(1.151);font-style:italic;">x</span>
<span class="t" style="left:177px;top:136px;font-size:10.67px;color:#111;font-family:'Liberation Serif', serif;">Ack;&quot;Priority&quot;;&quot;Date Created&quot;;&quot;Active Time&quot;;&quot;Level&quot;;&quot;Name&quot;;&quot;Value&quot;;&quot;State&quot;;&quot;Description&quot;</span>
<span class="t" style="left:235.8px;top:200.6px;font-size:10.67px;color:#185c37;font-family:'Liberation Serif', serif;width:7.200px;text-align:center;-webkit-text-stroke:0.250px currentColor;">A</span>
<span class="t" style="left:480.7px;top:200.6px;font-size:10.67px;color:#000;font-family:'Liberation Serif', serif;width:7.200px;text-align:center;-webkit-text-stroke:0.250px currentColor;">B</span>
<span class="t" style="left:528.3px;top:200.6px;font-size:10.67px;color:#000;font-family:'Liberation Serif', serif;width:7.200px;text-align:center;-webkit-text-stroke:0.250px currentColor;">C</span>
<span class="t" style="left:575.9px;top:200.6px;font-size:10.67px;color:#000;font-family:'Liberation Serif', serif;width:7.200px;text-align:center;-webkit-text-stroke:0.250px currentColor;">D</span>
<span class="t" style="left:623.6px;top:200.6px;font-size:10.67px;color:#000;font-family:'Liberation Serif', serif;width:7.200px;text-align:center;-webkit-text-stroke:0.250px currentColor;">E</span>
<span class="t" style="left:671.2px;top:200.6px;font-size:10.67px;color:#000;font-family:'Liberation Serif', serif;width:7.200px;text-align:center;-webkit-text-stroke:0.250px currentColor;">F</span>
<span class="t" style="left:718.8px;top:200.6px;font-size:10.67px;color:#000;font-family:'Liberation Serif', serif;width:7.200px;text-align:center;-webkit-text-stroke:0.250px currentColor;">G</span>
<span class="t" style="left:766.4px;top:200.6px;font-size:10.67px;color:#000;font-family:'Liberation Serif', serif;width:7.200px;text-align:center;-webkit-text-stroke:0.250px currentColor;">H</span>
<span class="t" style="left:814.0px;top:200.6px;font-size:10.67px;color:#000;font-family:'Liberation Serif', serif;width:7.200px;text-align:center;-webkit-text-stroke:0.250px currentColor;">I</span>
<span class="t" style="left:861.7px;top:200.6px;font-size:10.67px;color:#000;font-family:'Liberation Serif', serif;width:7.200px;text-align:center;-webkit-text-stroke:0.250px currentColor;">J</span>
<span class="t" style="left:909.3px;top:200.6px;font-size:10.67px;color:#000;font-family:'Liberation Serif', serif;width:7.200px;text-align:center;-webkit-text-stroke:0.250px currentColor;">K</span>
<span class="t" style="left:956.9px;top:200.6px;font-size:10.67px;color:#000;font-family:'Liberation Serif', serif;width:7.200px;text-align:center;-webkit-text-stroke:0.250px currentColor;">L</span>
<span class="t" style="left:1004.5px;top:200.6px;font-size:10.67px;color:#000;font-family:'Liberation Serif', serif;width:7.200px;text-align:center;-webkit-text-stroke:0.250px currentColor;">M</span>
<span class="t" style="left:0px;top:214.98px;font-size:10.67px;color:#185c37;font-family:'Liberation Serif', serif;width:16.900000000000002px;text-align:center;-webkit-text-stroke:0.300px currentColor;">1</span>
<span class="t" style="left:0px;top:229.03px;font-size:10.67px;color:#000;font-family:'Liberation Serif', serif;width:16.900000000000002px;text-align:center;-webkit-text-stroke:0.300px currentColor;">2</span>
<span class="t" style="left:0px;top:243.09px;font-size:10.67px;color:#000;font-family:'Liberation Serif', serif;width:16.900000000000002px;text-align:center;-webkit-text-stroke:0.300px currentColor;">3</span>
<span class="t" style="left:0px;top:257.14px;font-size:10.67px;color:#000;font-family:'Liberation Serif', serif;width:16.900000000000002px;text-align:center;-webkit-text-stroke:0.300px currentColor;">4</span>
<span class="t" style="left:0px;top:271.2px;font-size:10.67px;color:#000;font-family:'Liberation Serif', serif;width:16.900000000000002px;text-align:center;-webkit-text-stroke:0.300px currentColor;">5</span>
<span class="t" style="left:0px;top:285.25px;font-size:10.67px;color:#000;font-family:'Liberation Serif', serif;width:16.900000000000002px;text-align:center;-webkit-text-stroke:0.300px currentColor;">6</span>
<span class="t" style="left:0px;top:299.31px;font-size:10.67px;color:#000;font-family:'Liberation Serif', serif;width:16.900000000000002px;text-align:center;-webkit-text-stroke:0.300px currentColor;">7</span>
<span class="t" style="left:0px;top:313.36px;font-size:10.67px;color:#000;font-family:'Liberation Serif', serif;width:16.900000000000002px;text-align:center;-webkit-text-stroke:0.300px currentColor;">8</span>
<span class="t" style="left:0px;top:327.42px;font-size:10.67px;color:#000;font-family:'Liberation Serif', serif;width:16.900000000000002px;text-align:center;-webkit-text-stroke:0.300px currentColor;">9</span>
<span class="t" style="left:0px;top:341.47px;font-size:10.67px;color:#000;font-family:'Liberation Serif', serif;width:16.900000000000002px;text-align:center;-webkit-text-stroke:0.300px currentColor;">10</span>
<span class="t" style="left:0px;top:355.53px;font-size:10.67px;color:#000;font-family:'Liberation Serif', serif;width:16.900000000000002px;text-align:center;-webkit-text-stroke:0.300px currentColor;">11</span>
<span class="t" style="left:0px;top:369.58px;font-size:10.67px;color:#000;font-family:'Liberation Serif', serif;width:16.900000000000002px;text-align:center;-webkit-text-stroke:0.300px currentColor;">12</span>
<span class="t" style="left:0px;top:383.64px;font-size:10.67px;color:#000;font-family:'Liberation Serif', serif;width:16.900000000000002px;text-align:center;-webkit-text-stroke:0.300px currentColor;">13</span>
<span class="t" style="left:0px;top:397.69px;font-size:10.67px;color:#000;font-family:'Liberation Serif', serif;width:16.900000000000002px;text-align:center;-webkit-text-stroke:0.300px currentColor;">14</span>
<span class="t" style="left:0px;top:411.75px;font-size:10.67px;color:#000;font-family:'Liberation Serif', serif;width:16.900000000000002px;text-align:center;-webkit-text-stroke:0.300px currentColor;">15</span>
<span class="t" style="left:0px;top:425.8px;font-size:10.67px;color:#000;font-family:'Liberation Serif', serif;width:16.900000000000002px;text-align:center;-webkit-text-stroke:0.300px currentColor;">16</span>
<span class="t" style="left:0px;top:439.86px;font-size:10.67px;color:#000;font-family:'Liberation Serif', serif;width:16.900000000000002px;text-align:center;-webkit-text-stroke:0.300px currentColor;">17</span>
<span class="t" style="left:0px;top:453.91px;font-size:10.67px;color:#000;font-family:'Liberation Serif', serif;width:16.900000000000002px;text-align:center;-webkit-text-stroke:0.300px currentColor;">18</span>
<span class="t" style="left:0px;top:467.97px;font-size:10.67px;color:#000;font-family:'Liberation Serif', serif;width:16.900000000000002px;text-align:center;-webkit-text-stroke:0.300px currentColor;">19</span>
<span class="t" style="left:0px;top:482.02px;font-size:10.67px;color:#000;font-family:'Liberation Serif', serif;width:16.900000000000002px;text-align:center;-webkit-text-stroke:0.300px currentColor;">20</span>
<span class="t" style="left:0px;top:496.08px;font-size:10.67px;color:#000;font-family:'Liberation Serif', serif;width:16.900000000000002px;text-align:center;-webkit-text-stroke:0.300px currentColor;">21</span>
<span class="t" style="left:0px;top:510.13px;font-size:10.67px;color:#000;font-family:'Liberation Serif', serif;width:16.900000000000002px;text-align:center;-webkit-text-stroke:0.300px currentColor;">22</span>
<span class="t" style="left:20.8px;top:214.6px;font-size:10.67px;color:#000;font-family:'Liberation Serif', serif;">Ack;&quot;Priority&quot;;&quot;Date Created&quot;;&quot;Active Time&quot;;&quot;Level&quot;;&quot;Name&quot;;&quot;Value&quot;;&quot;State&quot;;&quot;Description&quot;</span>
<span class="t" style="left:20.6px;top:228.6px;font-size:10.67px;color:#000;font-family:'Liberation Serif', serif;transform:scaleX(1.007);">1;0;&quot;26-Nov-22 2:34:32.900 PM&quot;;&quot;26-Nov-22 2:34:32.000 PM&quot;;&quot;&quot;;&quot;Tag.DPI&quot;;2;2;&quot;Máy cắt đã mở&quot;</span>
</div></body></html>
